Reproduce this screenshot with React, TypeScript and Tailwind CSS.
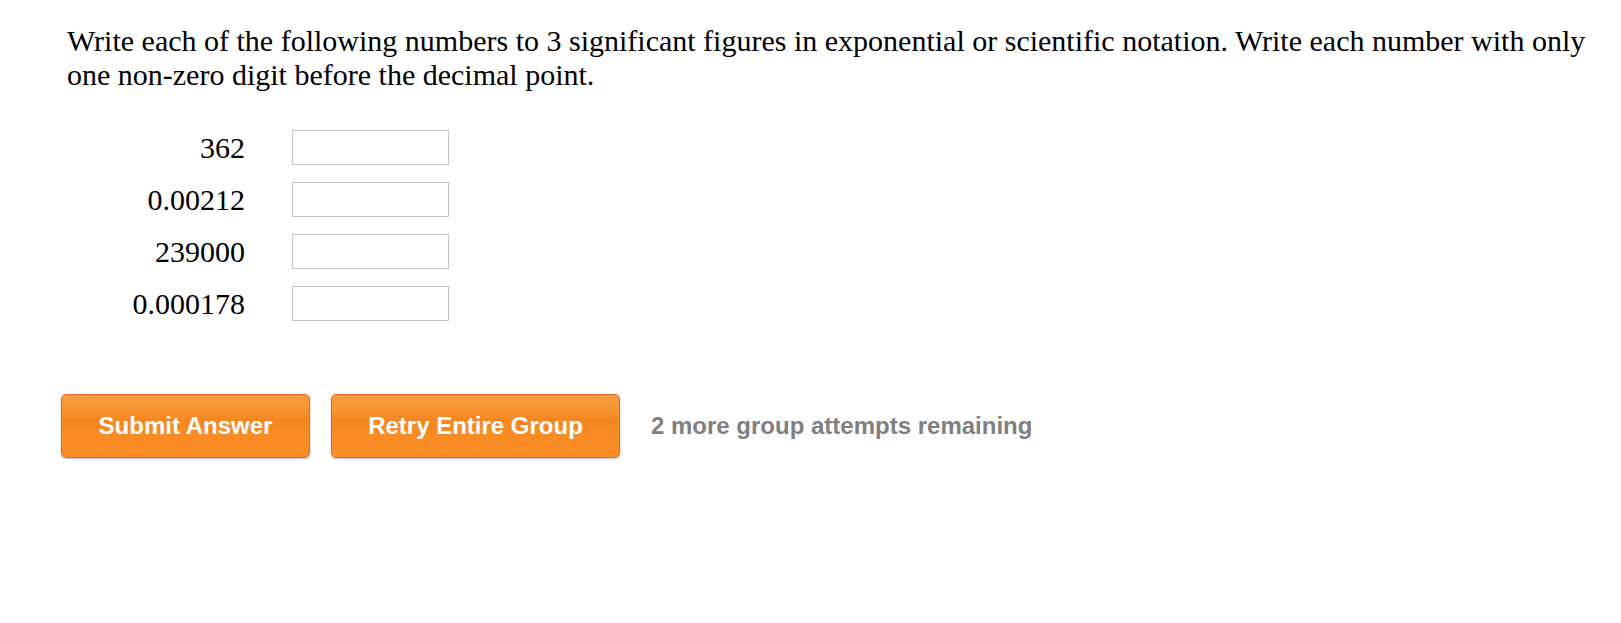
const rows = ["362", "0.00212", "239000", "0.000178"];

function OrangeButton({ label, width }: { label: string; width: string }) {
  return (
    <button
      type="button"
      className={`${width} h-[64px] rounded-[5px] border border-[#e0662c] bg-[linear-gradient(to_bottom,#fb9d42_0%,#f8902c_30%,#f3861f_40%,#f98b25_60%,#fb8c26_100%)] text-[24px] font-bold text-white shadow-[0_1px_2px_rgba(0,0,0,0.25)] [font-family:'Liberation_Sans',Arial,sans-serif]`}
    >
      {label}
    </button>
  );
}

export default function App() {
  return (
    <div className="min-h-[623px] bg-white pl-[67px] pr-[16px] pt-[24px]">
      <p className="text-[30px] leading-[34px] text-black [font-family:'Liberation_Serif','Times_New_Roman',serif]">
        Write each of the following numbers to 3 significant figures in exponential or scientific notation. Write each
        number with only one non-zero digit before the decimal point.
      </p>

      <div className="mt-[38px] flex flex-col gap-[17px]">
        {rows.map((r) => (
          <div key={r} className="flex items-center">
            <div className="w-[178px] text-right text-[30px] leading-[35px] text-black [font-family:'Liberation_Serif','Times_New_Roman',serif]">
              {r}
            </div>
            <input
              type="text"
              className="ml-[47px] h-[35px] w-[157px] border border-[#c4c4c4] bg-white outline-none"
            />
          </div>
        ))}
      </div>

      <div className="-ml-[6px] mt-[73px] flex items-center">
        <OrangeButton label="Submit Answer" width="w-[249px]" />
        <div className="ml-[21px]">
          <OrangeButton label="Retry Entire Group" width="w-[289px]" />
        </div>
        <span className="ml-[31px] text-[24px] font-bold text-[#808080] [font-family:'Liberation_Sans',Arial,sans-serif]">
          2 more group attempts remaining
        </span>
      </div>
    </div>
  );
}
